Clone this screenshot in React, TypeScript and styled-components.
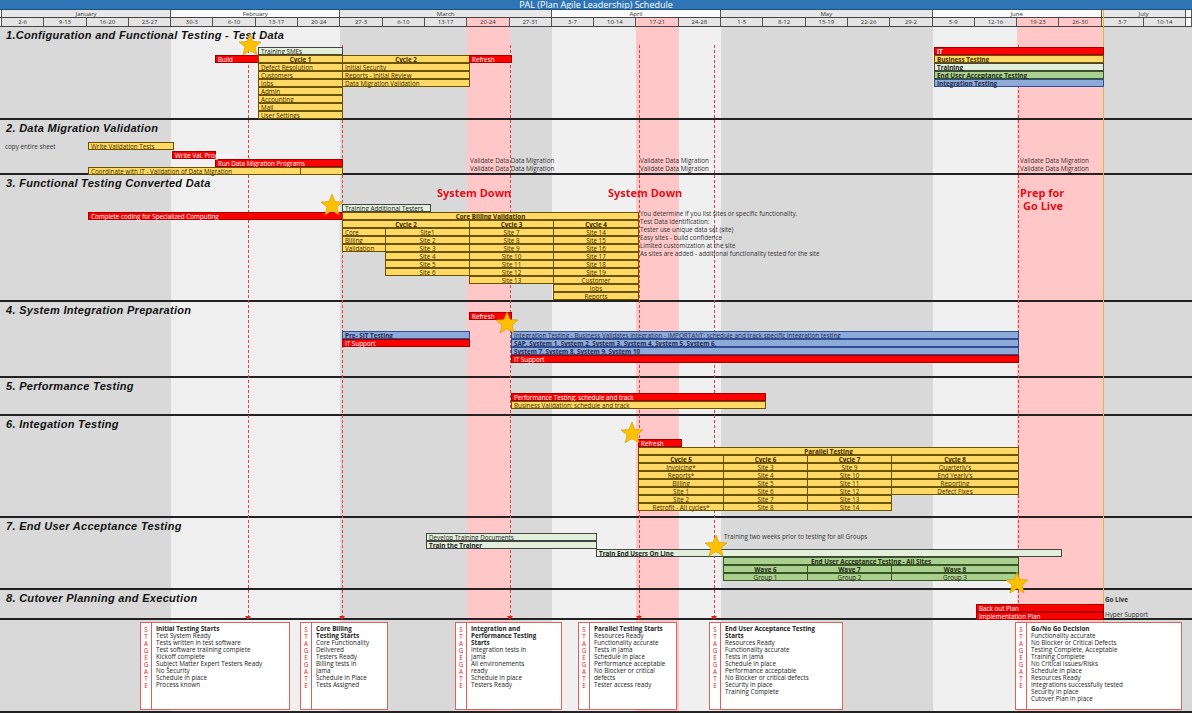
import React from "react";
import styled, { createGlobalStyle } from "styled-components";

const G = createGlobalStyle`
  html,body{margin:0;padding:0;background:#fff;}
  body{font-family:"Open Sans","Liberation Sans",sans-serif;}
`;

const CW = 42.3;
const X0 = 2;

const weeks = ["2-6","9-13","16-20","23-27","30-3","6-10","13-17","20-24","27-3","6-10","13-17","20-24","27-31","3-7","10-14","17-21","24-28","1-5","8-12","15-19","22-26","29-2","5-9","12-16","19-23","26-30","3-7","10-14"];
const pinkCols = [11, 15, 24, 25];
const months: [string, number, number][] = [["January",0,4],["February",4,8],["March",8,13],["April",13,17],["May",17,22],["June",22,26],["July",26,28]];
const monthShade = (i: number) => { const m = months.findIndex(mm => i >= mm[1] && i < mm[2]); return m % 2 === 0 ? "#d9d9d9" : "#f0f0f0"; };

const Page = styled.div`position:relative;width:1192px;height:713px;overflow:hidden;background:#fff;`;
const Title = styled.div`height:10px;background:#2e75b6;color:#fff;font-size:9px;line-height:10px;text-align:center;border-bottom:1px solid #1f4e79;box-sizing:border-box;overflow:hidden;`;
const HeadRow = styled.div<{ $h: number }>`display:grid;grid-template-columns:${X0}px repeat(28,${CW}px) 1fr;height:${p => p.$h}px;border-bottom:1px solid #444;box-sizing:border-box;`;
const HeadCell = styled.div<{ $bg: string; $span?: number }>`grid-column:span ${p => p.$span || 1};background:${p => p.$bg};border-right:1px solid #555;font-size:6px;line-height:8px;text-align:center;color:#333;overflow:hidden;`;
const Body = styled.div`position:relative;`;
const Stripes = styled.div`position:absolute;inset:0;display:grid;grid-template-columns:${X0}px repeat(28,${CW}px) 1fr;z-index:0;`;
const Stripe = styled.div<{ $bg: string }>`background:${p => p.$bg};`;
const Section = styled.div<{ $h: number }>`position:relative;z-index:1;height:${p => p.$h}px;border-bottom:2px solid #222;box-sizing:border-box;padding:2px 6px;`;
const SecTitle = styled.div`font-family:"Liberation Sans",Arial,sans-serif;font-weight:bold;font-style:italic;font-size:11px;letter-spacing:0.3px;color:#111;`;
const Canvas = styled.div`position:absolute;inset:0;z-index:2;pointer-events:none;`;

type V = "red" | "yel" | "lg" | "gr" | "bl" | "none";
const pal: Record<V, [string, string, string]> = {
  red: ["#ff0000", "#fff", "#a00000"],
  yel: ["#ffd966", "#3a2a00", "#6b5200"],
  lg: ["#e2efda", "#222", "#444"],
  gr: ["#a9d08e", "#1f2a10", "#375623"],
  bl: ["#8eaadb", "#1f2d50", "#2f4f8f"],
  none: ["transparent", "#333", "transparent"],
};
const BarBox = styled.div<{ $v: V; $b?: boolean; $c?: boolean }>`
  position:absolute;box-sizing:border-box;height:8px;padding:0 2px;white-space:nowrap;
  font-size:6.3px;line-height:7px;
  background:${p => pal[p.$v][0]};color:${p => pal[p.$v][1]};border:1px solid ${p => pal[p.$v][2]};
  font-weight:${p => (p.$b ? 700 : 400)};text-align:${p => (p.$c ? "center" : "left")};
`;
const Note = styled.div<{ $red?: boolean }>`position:absolute;white-space:nowrap;font-size:${p => (p.$red ? 11 : 6.3)}px;line-height:${p => (p.$red ? 12 : 8)}px;font-weight:${p => (p.$red ? 700 : 400)};color:${p => (p.$red ? "#e0101a" : "#333")};`;
const VLine = styled.div<{ $c: string; $dash?: boolean }>`position:absolute;width:0;border-left:1px ${p => (p.$dash ? "dashed" : "solid")} ${p => p.$c};`;
const Arrow = styled.div`position:absolute;width:0;height:0;border-left:3px solid transparent;border-right:3px solid transparent;border-top:4px solid #e02020;`;

type B = [number, number, number, string, V, string?];
const bars: B[] = [
  [258,342,47,"Training SMEs","lg"],
  [215,258,55,"Build","red"],[258,342,55,"Cycle 1","yel","bc"],[342,469,55,"Cycle 2","yel","bc"],[469,511,55,"Refresh","red"],
  ...["Defect Resolution","Customers","Jobs","Admin","Accounting","Mail","User Settings"].map((t,i)=>[258,342,63+8*i,t,"yel"] as B),
  ...["Initial Security","Reports - Initial Review","Data Migration Validation"].map((t,i)=>[342,469,63+8*i,t,"yel"] as B),
  [934,1103,47,"IT","red","b"],[934,1103,55,"Business Testing","yel","b"],[934,1103,63,"Training","lg","b"],[934,1103,71,"End User Acceptance Testing","gr","b"],[934,1103,79,"Integration Testing","bl","b"],
  [88,173,142,"Write Validation Tests","yel"],[215,342,159,"Run Data Migration Programs","red"],[172,215,151,"Write Val. Programs","red"],[88,300,167,"Coordinate with IT - Validation of Data Migration","yel"],[300,342,167,"","yel"],
  [342,430,204,"Training Additional Testers","lg"],[88,342,212,"Complete coding for Specialized Computing","red"],[342,638,212,"Core Billing Validation","yel","bc"],
  [342,469,220,"Cycle 2","yel","bc"],[469,553,220,"Cycle 3","yel","bc"],[553,638,220,"Cycle 4","yel","bc"],
  ...["Core","Billing","Validation"].map((t,i)=>[342,385,228+8*i,t,"yel"] as B),
  ...["Site1","Site 2","Site 3","Site 4","Site 5","Site 6"].map((t,i)=>[385,469,228+8*i,t,"yel","c"] as B),
  ...["Site 7","Site 8","Site 9","Site 10","Site 11","Site 12","Site 13"].map((t,i)=>[469,553,228+8*i,t,"yel","c"] as B),
  ...["Site 14","Site 15","Site 16","Site 17","Site 18","Site 19","Customer","Jobs","Reports"].map((t,i)=>[553,638,228+8*i,t,"yel","c"] as B),
  [469,511,312,"Refresh","red"],[342,469,331,"Pre- SIT Testing","bl","b"],[342,469,339,"IT Support","red"],
  [511,1018,331,"Integration Testing - Business Validates integration - IMPORTANT: schedule and track  specific integration testing","bl"],
  [511,1018,339," SAP, System 1, System 2, System 3, System 4, System 5, System 6,","bl","b"],[511,1018,347,"System 7, System 8, System 9, System 10","bl","b"],
  [511,1018,355,"IT Support","red"],
  [511,765,393,"Performance Testing: schedule and track","red"],[511,765,401,"Business Validation: schedule and track","yel"],
  [638,681,439,"Refresh","red"],[638,1018,447,"Parallel Testing","yel","bc"],
  ...["Cycle 5","Invoicing*","Reports*","Billing","Site 1","Site 2","Retrofit - All cycles*"].map((t,i)=>[638,723,455+8*i,t,"yel",i?"c":"bc"] as B),
  ...["Cycle 6","Site 3","Site 4","Site 5","Site 6","Site 7","Site 8"].map((t,i)=>[723,807,455+8*i,t,"yel",i?"c":"bc"] as B),
  ...["Cycle 7","Site 9","Site 10","Site 11","Site 12","Site 13","Site 14"].map((t,i)=>[807,891,455+8*i,t,"yel",i?"c":"bc"] as B),
  ...["Cycle 8","Quarterly's","End Yearly's","Reporting","Defect Fixes"].map((t,i)=>[891,1018,455+8*i,t,"yel",i?"c":"bc"] as B),
  [426,596,533,"Develop Training Documents","lg"],[426,596,541,"Train the Trainer","lg","b"],[596,1061,549,"Train End Users  On Line","lg","b"],
  [723,1018,557,"End User Acceptance Testing - All Sites","gr","bc"],
  [723,807,565,"Wave 6","gr","bc"],[807,891,565,"Wave 7","gr","bc"],[891,1018,565,"Wave 8","gr","bc"],
  [723,807,573,"Group 1","gr","c"],[807,891,573,"Group 2","gr","c"],[891,1018,573,"Group 3","gr","c"],
  [976,1103,604,"Back out Plan","red"],[976,1103,612,"Implementation Plan","red"],
];

const notes: [number, number, string, boolean?, boolean?][] = [
  [5,143,"copy entire sheet"],
  [470,157,"Validate Data Data Migration"],[470,165,"Validate Data Data Migration"],
  [640,157,"Validate Data Migration"],[640,165,"Validate Data Migration"],
  [1020,157,"Validate Data Migration"],[1020,165,"Validate Data Migration"],
  [437,187,"System Down",true],[608,187,"System Down",true],[1020,187,"Prep for",true],[1023,200,"Go Live",true],
  [640,210,"You determine if you list sites or specific functionality."],[640,218,"Test Data Identification:"],[640,226,"Tester use unique data set (site)"],
  [640,234,"Easy sites - build confidence"],[640,242,"Limited customization at the site"],[640,250,"As sites are added - additional functionality tested for the site"],
  [724,533,"Training two weeks prior to testing for all Groups"],
  [1105,596,"Go Live",false,true],[1105,611,"Hyper Support",false,false],
];

const stars: [number, number][] = [[250,45],[332,205],[507,323],[632,433],[716,546],[1017,583]];
const redLines = [248, 342, 510, 639, 714, 1018];

const StarSvg = styled.svg`position:absolute;width:24px;height:23px;`;
const Star = ({ x, y }: { x: number; y: number }) => (
  <StarSvg viewBox="0 0 24 23" style={{ left: x - 12, top: y - 12 }}>
    <polygon points="12,1 15,8.5 23,9 17,14 19,22 12,17.5 5,22 7,14 1,9 9,8.5" fill="#ffc000" stroke="#c99700" strokeWidth="0.6" />
  </StarSvg>
);

const GateBox = styled.div`position:absolute;top:622px;height:88px;display:flex;z-index:3;`;
const GateLetters = styled.div`width:12px;border:1px solid #e06060;background:#fff;display:flex;flex-direction:column;align-items:center;padding-top:3px;box-sizing:border-box;color:#e02020;font-size:6.3px;line-height:7px;`;
const GateText = styled.div`flex:1;border:1px solid #e06060;border-left:none;background:#fff;padding:2px 4px;box-sizing:border-box;font-size:6.3px;line-height:7px;color:#222;`;
const GateHead = styled.div`font-weight:700;`;

const gates: [number, number, string, string[]][] = [
  [140,290,"Initial Testing Starts",["Test System Ready","Tests written in test software","Test software traiining complete","Kickoff complete","Subject Matter Expert Testers Ready","No Security","Schedule in place","Process known"]],
  [300,388,"Core Billing\nTesting Starts",["Core Functionality","Delivered","Testers Ready","Billing tests in","Jama","Schedule in Place","Tests Assigned"]],
  [455,562,"Integration and\nPerformance Testing\nStarts",["Integration tests in","Jama","All environements","ready","Schedule in place","Testers Ready"]],
  [578,677,"Parallel Testing Starts",["Resources Ready","Functionality accurate","Tests in Jama","Schedule in place","Performance acceptable","No Blocker or critical","defects","Tester access ready"]],
  [709,843,"End User Acceptance Testing\nStarts",["Resources Ready","Functionality accurate","Tests in Jama","Schedule in place","Performance acceptable","No Blocker or critical defects","Security in place","Training Complete"]],
  [1015,1182,"Go/No Go Decision",["Functionality accurate","No Blocker or Critical Defects","Testing Complete, Acceptable","Training Complete","No Critical Issues/Risks","Schedule in place","Resources Ready","Integrations successfully tested","Security in place","Cutover Plan in place"]],
];

const sections: [string, number][] = [
  ["1.Configuration and Functional Testing - Test Data", 93],
  ["2. Data Migration Validation", 55],
  ["3. Functional Testing Converted Data", 127],
  ["4. System Integration Preparation", 76],
  ["5. Performance Testing", 38],
  ["6. Integation Testing", 102],
  ["7. End User Acceptance Testing", 72],
  ["8. Cutover Planning and Execution", 30],
];

export default function App() {
  return (
    <Page>
      <G />
      <Title>PAL  (Plan Agile Leadership) Schedule</Title>
      <HeadRow $h={8}>
        <HeadCell $bg="#fff" />
        {months.map(([m, a, b], mi) => <HeadCell key={m} $bg={mi % 2 === 0 ? "#e8e8e8" : "#fafafa"} $span={b - a}>{m}</HeadCell>)}
        <HeadCell $bg="#fff" />
      </HeadRow>
      <HeadRow $h={9}>
        <HeadCell $bg="#fff" />
        {weeks.map((w, i) => <HeadCell key={i} $bg={pinkCols.includes(i) ? "#ffc7c7" : "#e4e4e4"}>{w}</HeadCell>)}
        <HeadCell $bg="#fff" />
      </HeadRow>
      <Body>
        <Stripes>
          <Stripe $bg="#d9d9d9" />
          {weeks.map((_, i) => <Stripe key={i} $bg={pinkCols.includes(i) ? "#ffc7c7" : monthShade(i)} />)}
          <Stripe $bg="#d9d9d9" />
        </Stripes>
        {sections.map(([t, h]) => <Section key={t} $h={h}><SecTitle>{t}</SecTitle></Section>)}
        <Section $h={93} />
      </Body>
      <Canvas>
        {redLines.map(x => <React.Fragment key={x}><VLine $c="#e04040" $dash style={{ left: x, top: 45, height: 573 }} /><Arrow style={{ left: x - 3, top: 616 }} /></React.Fragment>)}
        <VLine $c="#f0b030" style={{ left: 1103, top: 10, height: 612 }} />
        {bars.map(([a, b, y, t, v, o], i) => (
          <BarBox key={i} $v={v} $b={!!o && o.includes("b")} $c={!!o && o.includes("c")} style={{ left: a, top: y, width: b - a + 1 }}>{t}</BarBox>
        ))}
        {notes.map(([x, y, t, r, b], i) => <Note key={i} $red={r} style={{ left: x, top: y, fontWeight: b ? 700 : undefined }}>{t}</Note>)}
        {stars.map(([x, y], i) => <Star key={i} x={x} y={y} />)}
      </Canvas>
      {gates.map(([a, b, h, lines], i) => (
        <GateBox key={i} style={{ left: a, width: b - a }}>
          <GateLetters>{"STAGEGATE".split("").map((c, j) => <span key={j}>{c}</span>)}</GateLetters>
          <GateText>
            {h.split("\n").map((l, j) => <GateHead key={j}>{l}</GateHead>)}
            {lines.map((l, j) => <div key={j}>{l}</div>)}
          </GateText>
        </GateBox>
      ))}
    </Page>
  );
}
